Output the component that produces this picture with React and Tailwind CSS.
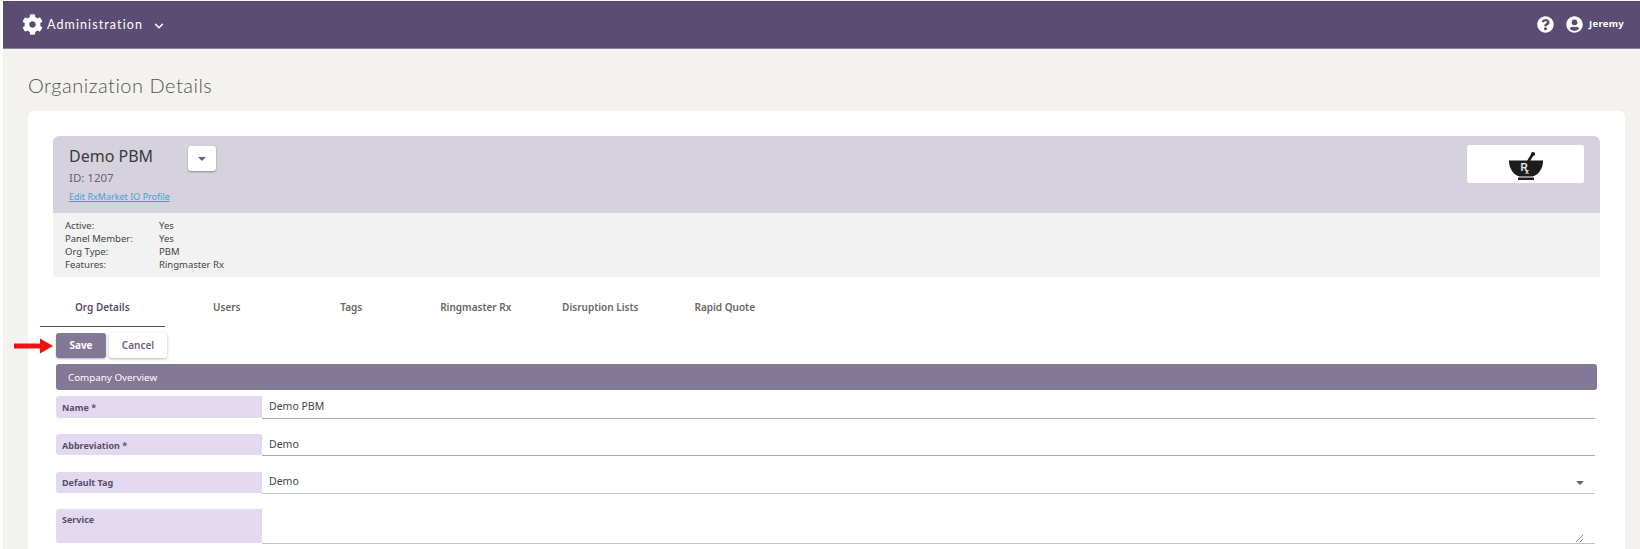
import React from 'react';
import { ChevronDown } from 'lucide-react';
import { FaCog, FaQuestionCircle, FaUserCircle } from 'react-icons/fa';

const body = "font-['Noto_Sans','Open_Sans',sans-serif]";

function MortarIcon() {
  return (
    <svg className="mt-[2px]" width="36" height="32" viewBox="0 0 36 32">
      <path d="M20.500 12 L24.500 5.500" stroke="#1c1c1c" strokeWidth="2.600" strokeLinecap="round" />
      <circle cx="25" cy="5" r="2.100" fill="#1c1c1c" />
      <path d="M1 11.500 H35 V13.500 C34 21 30 26 24.500 27.500 H11.500 C6 26 2 21 1 13.500 Z" fill="#1c1c1c" />
      <rect x="10" y="28.500" width="16" height="2.500" fill="#1c1c1c" />
      <text x="12.500" y="21.500" fontSize="10" fontWeight="700" fontFamily="Liberation Sans" fill="#e8e8e8">R</text>
      <text x="17" y="24.500" fontSize="7" fontWeight="700" fontFamily="Liberation Sans" fill="#e8e8e8">x</text>
    </svg>
  );
}

function Field({ label, value, h, select, area, labelPad = 'pt-[5px]', mb = 'mb-[16px]' }) {
  return (
    <div className={`flex ${mb}`} style={{ height: h }}>
      <div className={`w-[206px] shrink-0 rounded-l-[3px] bg-[#e2d8f0] pl-[6px] text-[9px] font-bold leading-[13px] text-[#5a4f6b] ${labelPad}`}>
        {label}
      </div>
      <div className={`relative mr-[3px] mb-[-1px] flex-1 border-b-[1.500px] pl-[7px] text-[10.500px] text-[#444] ${select ? 'leading-[18px]' : 'leading-[20px]'} ${select || area ? 'border-[#c4c4c4]' : 'border-[#aaa]'}`}>
        {value}
        {select && <span className="absolute right-[11px] top-[9px] h-0 w-0 border-x-[4px] border-t-[4px] border-x-transparent border-t-[#666]" />}
        {area && (
          <svg className="absolute bottom-0 right-[11px]" width="9" height="9" viewBox="0 0 9 9">
            <path d="M1 8 L8 1 M5 8 L8 5" stroke="#888" strokeWidth="1" />
          </svg>
        )}
      </div>
    </div>
  );
}

export default function App() {
  const tabs = ['Org Details', 'Users', 'Tags', 'Ringmaster Rx', 'Disruption Lists', 'Rapid Quote'];
  const facts = [
    ['Active:', 'Yes'],
    ['Panel Member:', 'Yes'],
    ['Org Type:', 'PBM'],
    ['Features:', 'Ringmaster Rx'],
  ];

  return (
    <div className={`h-[549px] w-[1640px] overflow-hidden bg-white pl-[3px] pt-[1px] ${body}`}>
      {/* Top bar */}
      <header className="flex h-[48px] items-center justify-between border-b border-[#8d83a0] bg-[#5b4c73] pl-[19px] pr-[16px] text-white">
        <div className="flex items-center">
          <FaCog className="text-[21px]" />
          <span className="ml-[4px] mt-[2px] font-['Lato',sans-serif] text-[12.500px] tracking-[1.1px]">Administration</span>
          <ChevronDown size={14} strokeWidth={2.5} className="ml-[9px] mt-[3px]" />
        </div>
        <div className="flex items-center">
          <FaQuestionCircle className="text-[17px]" />
          <FaUserCircle className="ml-[12px] text-[17px]" />
          <span className="ml-[6px] text-[9.500px] font-bold tracking-[0.3px]">Jeremy</span>
        </div>
      </header>

      <main className="h-[500px] bg-[#f3f2ee] pl-[25px] pr-[15px]">
        <h1 className="flex h-[62px] items-center pt-[10px] font-['Lato',sans-serif] text-[20px] font-light tracking-[0.5px] text-[#555]">
          Organization Details
        </h1>

        {/* Organization card */}
        <div className="h-[438px] rounded-t-[6px] bg-white pl-[25px] pr-[25px] pt-[25px]">
          <div className="relative h-[77px] rounded-t-[6px] bg-[#d5d2dd] pl-[16px] pt-[9px]">
            <div className="flex items-start">
              <div className="w-[119px] text-[16px] leading-[23px] text-[#3a3a3a]">Demo PBM</div>
              <button className="mt-[1px] flex h-[25px] w-[28px] items-center justify-center rounded-[3px] bg-white shadow-[0_1px_2px_rgba(0,0,0,0.35)]">
                <span className="h-0 w-0 border-x-[4px] border-t-[4px] border-x-transparent border-t-[#6b6080]" />
              </button>
            </div>
            <div className="mt-[-1px] text-[11.500px] leading-[16px] text-[#666]">ID: 1207</div>
            <a className="mt-[4px] block text-[9px] leading-[14px] text-[#4a9fd0] underline">Edit RxMarket IO Profile</a>
            <div className="absolute right-[16px] top-[9px] flex h-[38px] w-[117px] items-center justify-center rounded-[2px] bg-white">
              <MortarIcon />
            </div>
          </div>

          <div className="grid h-[64px] grid-cols-[94px_1fr] content-start bg-[#f2f2f2] pl-[12px] pt-[6px] text-[9.500px] leading-[13px] text-[#444]">
            {facts.map(([k, v]) => (
              <React.Fragment key={k}>
                <div>{k}</div>
                <div>{v}</div>
              </React.Fragment>
            ))}
          </div>

          {/* Tabs */}
          <div className="ml-[-13px] flex h-[50px]">
            {tabs.map((t, i) => (
              <div
                key={t}
                className={`flex w-[124.500px] justify-center pt-[23px] text-[10px] font-semibold leading-[15px] ${i === 0 ? 'border-b border-[#5b4c73] text-[#5b4c73]' : 'text-[#666]'}`}
              >
                {t}
              </div>
            ))}
          </div>

          <div className="ml-[3px] mt-[6px] flex gap-[3px]">
            <button className="h-[25px] w-[50px] rounded-[3px] bg-[#837896] text-[10px] font-bold text-white shadow-[0_1px_2px_rgba(0,0,0,0.3)]">Save</button>
            <button className="h-[25px] w-[58px] rounded-[3px] bg-white text-[10px] font-semibold text-[#6b6080] shadow-[0_1px_3px_rgba(0,0,0,0.3)]">Cancel</button>
          </div>

          <div className="ml-[3px] mr-[3px] mt-[6px] h-[26px] rounded-[3px] bg-[#837896] pl-[12px] text-[9.800px] leading-[27px] text-white">
            Company Overview
          </div>

          <div className="ml-[3px] mr-[2px] mt-[6px]">
            <Field label="Name *" value="Demo PBM" h="22px" />
            <Field label="Abbreviation *" value="Demo" h="21px" mb="mb-[17px]" />
            <Field label="Default Tag" value="Demo" h="21px" labelPad="pt-[4px]" select />
            <Field label="Service" value="" h="34px" labelPad="pt-[4px]" area mb="mb-0" />
          </div>
        </div>
      </main>

      {/* Red pointer arrow annotating Save */}
      <svg className="absolute left-[14px] top-[338px]" width="40" height="16" viewBox="0 0 40 16">
        <path d="M0 5.500 H26 V0.500 L39 8 L26 15.500 V10.500 H0 Z" fill="#ee1111" />
      </svg>
    </div>
  );
}
